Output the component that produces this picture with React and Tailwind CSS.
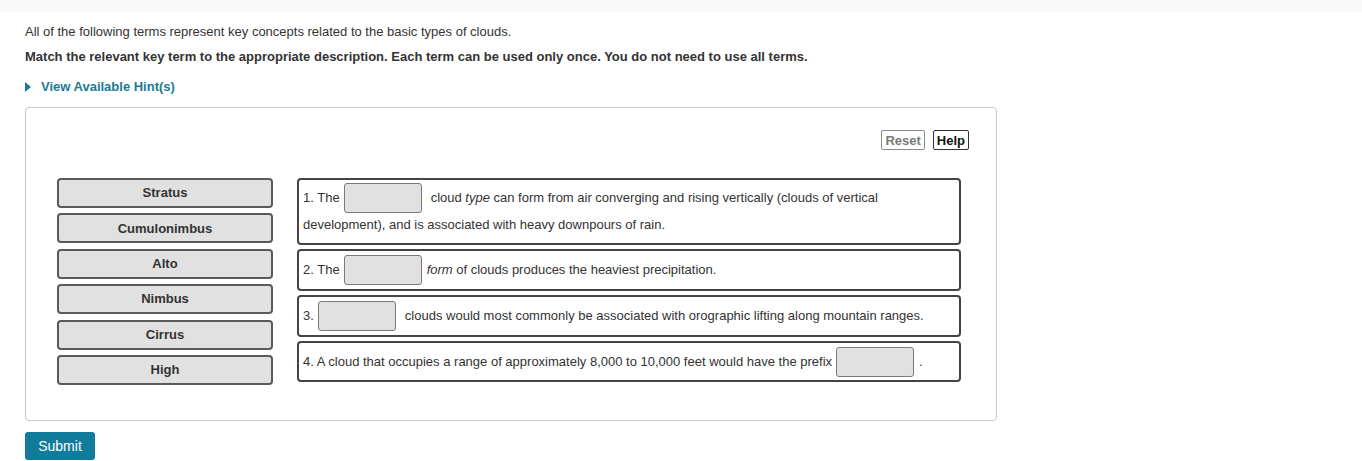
import React from 'react';

const terms = ["Stratus", "Cumulonimbus", "Alto", "Nimbus", "Cirrus", "High"];

// empty drop target for a term
function DropBox({ className = "" }) {
  return (
    <span className={`inline-block w-[78px] h-[30px] shrink-0 rounded-[3px] border border-[#7a7a7a] bg-[#e1e1e1] ${className}`} />
  );
}

export default function App() {
  return (
    <div className="w-[1362px] h-[461px] bg-white text-[#333] overflow-hidden" style={{ fontFamily: '"Liberation Sans", Arial, sans-serif' }}>
      {/* top strip */}
      <div className="h-[12px] bg-[#f9f9f9]" />

      <div className="px-[25px]">
        {/* intro */}
        <p className="mt-[10px] h-[20px] leading-[20px] text-[13px]">
          All of the following terms represent key concepts related to the basic types of clouds.
        </p>
        <p className="mt-[5px] h-[20px] leading-[20px] text-[13px] font-bold">
          Match the relevant key term to the appropriate description. Each term can be used only once. You do not need to use all terms.
        </p>
        <div className="mt-[10px] h-[20px] flex items-center text-[13px] font-bold text-[#1b7a98]">
          <span className="inline-block w-0 h-0 border-y-[5px] border-y-transparent border-l-[6px] border-l-[#1b7a98] mr-[10px]" />
          View Available Hint(s)
        </div>

        {/* activity panel */}
        <div className="mt-[10px] w-[972px] h-[314px] rounded-[4px] border border-[#c8c8c8] pt-[22px] pr-[27px] pl-[31px]">
          <div className="flex justify-end gap-[8px] h-[20px]">
            <button className="h-[20px] px-[3px] rounded-[2px] border border-[#8a8a8a] text-[13px] font-bold text-[#7a7a7a] leading-none">Reset</button>
            <button className="h-[20px] px-[3px] rounded-[2px] border border-[#333] text-[13px] font-bold text-[#111] leading-none">Help</button>
          </div>

          <div className="mt-[28px] flex gap-[24px]">
            {/* terms */}
            <div className="w-[216px] flex flex-col gap-[5.4px]">
              {terms.map((t) => (
                <div key={t} className="h-[30px] rounded-[4px] border-2 border-[#5a5a5a] bg-[#e1e1e1] flex items-center justify-center text-[13px] font-bold text-[#333]">
                  {t}
                </div>
              ))}
            </div>

            {/* descriptions */}
            <div className="w-[664px] flex flex-col gap-[4px] text-[13px]">
              <div className="h-[67px] rounded-[4px] border-2 border-[#444] px-[4px] pt-[3px]">
                <div className="h-[30px] flex items-center">
                  <span>1. The</span>
                  <DropBox className="ml-[4px]" />
                  <span className="ml-[9px]">cloud <i>type</i> can form from air converging and rising vertically (clouds of vertical</span>
                </div>
                <div className="h-[24px] flex items-center">development), and is associated with heavy downpours of rain.</div>
              </div>

              <div className="h-[42px] rounded-[4px] border-2 border-[#444] px-[4px] flex items-center">
                <span>2. The</span>
                <DropBox className="ml-[4px]" />
                <span className="ml-[5px]"><i>form</i> of clouds produces the heaviest precipitation.</span>
              </div>

              <div className="h-[42px] rounded-[4px] border-2 border-[#444] px-[4px] flex items-center">
                <span>3.</span>
                <DropBox className="ml-[4px]" />
                <span className="ml-[9px]">clouds would most commonly be associated with orographic lifting along mountain ranges.</span>
              </div>

              <div className="h-[41px] rounded-[4px] border-2 border-[#444] px-[4px] flex items-center">
                <span>4. A cloud that occupies a range of approximately 8,000 to 10,000 feet would have the prefix</span>
                <DropBox className="ml-[4px]" />
                <span className="ml-[5px]">.</span>
              </div>
            </div>
          </div>
        </div>

        <button className="mt-[11px] w-[70px] h-[28px] rounded-[3px] bg-[#117b9b] text-white text-[14px]">Submit</button>
      </div>
    </div>
  );
}
